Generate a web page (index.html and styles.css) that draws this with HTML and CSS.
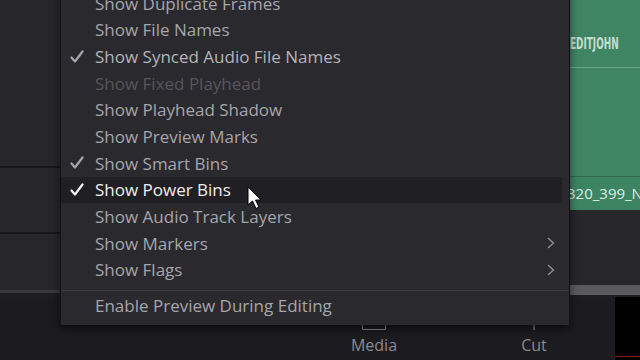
FILE: index.html
```html
<!doctype html>
<html>
	<head>
		<meta http-equiv="Content-Type" content="text/html; charset=utf-8">
		<title>Timeline view options</title>
		<link rel="stylesheet" href="styles.css">
	</head>
<body>
	<div class="app">
		<div class="timeline">
			<div class="headers">
				<div class="hrow h1"></div>
				<div class="hrow h2"></div>
				<div class="hrow h3"></div>
			</div>
			<div class="tracks">
				<div class="clip">
					<div class="clip-top"><span class="clip-name">EDITJOHN</span></div>
					<div class="clip-mid"></div>
					<div class="clip-label"><span>320_399_N</span></div>
				</div>
				<div class="track-empty"></div>
			</div>
		</div>
		<div class="scrollrow">
			<div class="scroll-left"></div>
			<div class="scroll-thumb"></div>
		</div>
		<div class="pagebar">
			<div class="page media"><span class="page-icon"></span>Media</div>
			<div class="page cut"><span class="page-icon"></span>Cut</div>
			<div class="viewer"></div>
		</div>

		<!-- popup menu -->
		<ul class="menu">
			<li><span class="check"></span>Show Duplicate Frames</li>
			<li><span class="check"></span>Show File Names</li>
			<li class="bright"><span class="check"><svg width="14" height="14" viewBox="0 0 14 14"><path d="M1.5 7.5 L5 11.5 L12.5 1.5" /></svg></span>Show Synced Audio File Names</li>
			<li class="disabled"><span class="check"></span>Show Fixed Playhead</li>
			<li><span class="check"></span>Show Playhead Shadow</li>
			<li><span class="check"></span>Show Preview Marks</li>
			<li><span class="check"><svg width="14" height="14" viewBox="0 0 14 14"><path d="M1.5 7.5 L5 11.5 L12.5 1.5" /></svg></span>Show Smart Bins</li>
			<li class="hover"><span class="check"><svg width="14" height="14" viewBox="0 0 14 14"><path d="M1.5 7.5 L5 11.5 L12.5 1.5" /></svg></span>Show Power Bins</li>
			<li><span class="check"></span>Show Audio Track Layers</li>
			<li><span class="check"></span>Show Markers<svg class="more" width="8" height="12" viewBox="0 0 8 12"><path d="M1.5 1.5 L6.5 6 L1.5 10.5" /></svg></li>
			<li><span class="check"></span>Show Flags<svg class="more" width="8" height="12" viewBox="0 0 8 12"><path d="M1.5 1.5 L6.5 6 L1.5 10.5" /></svg></li>
			<li class="sep"></li>
			<li><span class="check"></span>Enable Preview During Editing</li>
		</ul>

		<svg class="cursor" width="16" height="24" viewBox="0 0 16 24"><path d="M1 1 L1 19 L5.5 15 L9 22.5 L12 21 L8.5 14 L14 14 Z" /></svg>
	</div>
</body>
</html>
```

FILE: styles.css
```css
*{margin:0;padding:0;box-sizing:border-box;}
ul,li{list-style:none}
body{background:#1c1b20;font-family:"Open Sans","Noto Sans",sans-serif;overflow:hidden;}
.app{position:relative;width:640px;height:360px;overflow:hidden;background:#1c1b20;}

/* timeline behind the menu */
.timeline{display:flex;height:285px;}
.headers{width:570px;display:flex;flex-direction:column;background:#27262b;}
.hrow{border-bottom:2px solid #18171b;}
.h1{height:168px;}
.h2{height:66px;}
.h3{flex:1;border-bottom:0;}
.tracks{flex:1;display:flex;flex-direction:column;overflow:hidden;}
.clip{height:210px;background:#3f8564;display:flex;flex-direction:column;}
.clip-top{height:68px;border-bottom:1px solid #69a886;padding-top:35px;}
.clip-name{display:block;font-family:"DejaVu Sans Condensed","DejaVu Sans",sans-serif;font-stretch:condensed;font-weight:bold;font-size:15px;line-height:18px;color:#c6dccf;white-space:nowrap;transform:scaleX(0.66);transform-origin:left center;}
.clip-mid{height:109px;border-bottom:1px solid #30694e;}
.clip-label{flex:1;background:#3d8462;padding-top:6px;white-space:nowrap;}
.clip-label span{display:block;margin-left:-3px;font-size:15px;line-height:20px;color:#dbeee2;}
.track-empty{flex:1;background:#27262b;}

.scrollrow{display:flex;height:12px;}
.scroll-left{width:570px;background:linear-gradient(#27262b 0,#27262b 5px,#39383d 5px,#39383d 8px,#1e1d22 8px);}
.scroll-thumb{flex:1;background:linear-gradient(#5a595e 0,#5a595e 10px,#1e1d22 10px);}

/* page tabs */
.pagebar{display:flex;height:63px;padding-left:334px;}
.page{width:80px;display:flex;flex-direction:column;align-items:center;padding-top:19px;font-size:16px;line-height:20px;color:#8b8a90;}
.page-icon{display:block;height:14px;margin-bottom:5px;}
.media .page-icon{width:24px;border:1px solid #8b8a90;border-radius:1px;}
.cut{margin-left:80px;}
.cut .page-icon{width:2px;background:#6f6e74;}
.viewer{margin-left:auto;width:25px;background:#000;box-shadow:inset 0 -3px 0 #000, inset 0 -4px 0 #8b1c1c;}

/* popup menu */
.menu{position:absolute;left:60px;top:-14px;width:510px;padding:4px 0 6px;background:#2a292e;border-left:1px solid #131216;border-right:1px solid #131216;box-shadow:0 4px 8px rgba(0,0,0,.55);}
.menu li{display:flex;align-items:center;height:26.667px;font-size:17px;color:#a6a5ab;white-space:nowrap;}
.menu li.bright{color:#b4b3b9;}
.menu li.disabled{color:#56555b;}
.menu li.hover{background:#201f24;color:#eeeeee;margin-right:7px;}
.check{width:34px;height:14px;padding-left:9px;flex:none;}
.check svg{display:block;}
.check path{fill:none;stroke:#a6a5ab;stroke-width:2.2;stroke-linecap:round;stroke-linejoin:round;}
.hover .check path{stroke:#f2f2f2;}
.more{margin-left:auto;margin-right:14px;}
.more path{fill:none;stroke:#8c8b91;stroke-width:1.6;stroke-linecap:round;stroke-linejoin:round;}
.menu li.sep{height:9.4px;padding-top:4.2px;}
.menu li.sep:after{content:"";display:block;width:100%;height:1px;background:#3c3b40;}

.cursor{position:absolute;left:247px;top:186px;}
.cursor path{fill:#fff;stroke:#000;stroke-width:1;stroke-linejoin:round;}
```
